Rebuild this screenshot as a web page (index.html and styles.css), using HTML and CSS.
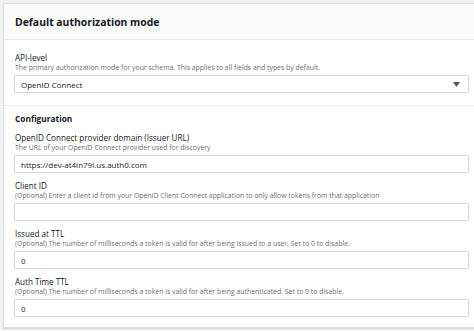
FILE: index.html
```html
<!DOCTYPE html>
<html>
<head>
<meta charset="utf-8">
<link rel="stylesheet" href="styles.css">
</head>
<body>
<div class="card">
  <div class="card-header"><h2 class="title">Default authorization mode</h2></div>
  <div class="section section-top">
    <div class="field">
      <div class="label">API-level</div>
      <div class="desc">The primary authorization mode for your schema. This applies to all fields and types by default.</div>
      <div class="select">
        <span class="value">OpenID Connect</span>
        <svg class="caret" width="7" height="5" viewBox="0 0 7 5"><path d="M0 0 H7 L3.5 5 Z" fill="#545b64"/></svg>
      </div>
    </div>
  </div>
  <div class="section section-config">
    <div class="section-title">Configuration</div>
    <div class="field">
      <div class="label">OpenID Connect provider domain (Issuer URL)</div>
      <div class="desc">The URL of your OpenID Connect provider used for discovery</div>
      <div class="input"><span class="value">https://dev-at4in79i.us.auth0.com</span></div>
    </div>
    <div class="field">
      <div class="label">Client ID</div>
      <div class="desc">(Optional) Enter a client id from your OpenID Client Connect application to only allow tokens from that application</div>
      <div class="input"><span class="value"></span></div>
    </div>
    <div class="field">
      <div class="label">Issued at TTL</div>
      <div class="desc">(Optional) The number of milliseconds a token is valid for after being issued to a user. Set to 0 to disable.</div>
      <div class="input"><span class="value">0</span></div>
    </div>
    <div class="field">
      <div class="label">Auth Time TTL</div>
      <div class="desc">(Optional) The number of milliseconds a token is valid for after being authenticated. Set to 0 to disable.</div>
      <div class="input"><span class="value">0</span></div>
    </div>
  </div>
</div>
</body>
</html>
```
FILE: styles.css
```css
html, body {
  margin: 0;
  padding: 0;
}
body {
  background: #f2f3f3;
  width: 474px;
  height: 331px;
  overflow: hidden;
  padding: 3px 0 0 3px;
  box-sizing: border-box;
  font-family: "Open Sans", "Liberation Sans", sans-serif;
  color: #16191f;
}
.card {
  width: 479px;
  background: #fff;
  border: 1px solid #dfe3e3;
  box-sizing: border-box;
  box-shadow: 0 1px 1px rgba(0,28,36,0.12);
}
.card-header {
  background: #fafafa;
  border-bottom: 1px solid #eaeded;
  height: 35px;
  display: flex;
  align-items: center;
  padding: 0 11px;
}
.title {
  margin: 0;
  font-size: 10.4px;
  font-weight: 700;
}
.section {
  padding: 0 12px 0 10px;
}
.section-top {
  padding-top: 12px;
  padding-bottom: 12px;
  border-bottom: 1px solid #eaeded;
}
.section-config {
  padding-top: 7px;
  padding-bottom: 10px;
}
.section-title {
  font-size: 8.3px;
  font-weight: 700;
  line-height: 12px;
  margin-bottom: 7px;
  padding-left: 1px;
}
.field {
  display: flex;
  flex-direction: column;
  margin-bottom: 7px;
}
.field:last-child {
  margin-bottom: 0;
}
.label {
  font-size: 8.1px;
  line-height: 11px;
  padding-left: 1px;
}
.desc {
  font-size: 6.9px;
  line-height: 10px;
  color: #687078;
  padding-left: 1px;
  margin-bottom: 2px;
  white-space: nowrap;
}
.select, .input {
  height: 18px;
  border: 1px solid #d5dbdb;
  border-radius: 1px;
  box-sizing: border-box;
  display: flex;
  align-items: center;
  padding: 0 8px 0 6px;
  font-size: 8px;
}
.select {
  justify-content: space-between;
}
.caret {
  display: block;
}
```
